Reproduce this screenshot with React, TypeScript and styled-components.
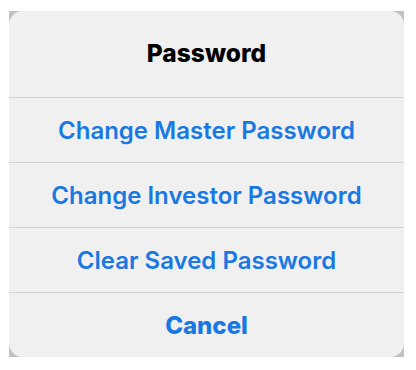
import React from "react";
import styled, { createGlobalStyle } from "styled-components";

const GlobalStyle = createGlobalStyle`
  html, body {
    margin: 0;
    padding: 0;
    background: #ffffff;
  }
  body {
    font-family: Inter, "Liberation Sans", sans-serif;
  }
`;

const Page = styled.div`
  padding: 11px 12px 13px 9px;
`;

const Backdrop = styled.div`
  background: #c2c2c2;
  width: 395px;
  height: 346px;
`;

const Sheet = styled.div`
  display: flex;
  flex-direction: column;
  height: 100%;
  background: #f0f0f0;
  border-radius: 14px;
  overflow: hidden;
`;

const Header = styled.div`
  height: 86px;
  display: flex;
  align-items: center;
  justify-content: center;
  font-size: 24.5px;
  font-weight: 800;
  color: #000;
  padding-bottom: 2px;
  box-sizing: border-box;
`;

const Action = styled.button<{ $bold?: boolean }>`
  flex: 1;
  display: flex;
  align-items: center;
  justify-content: center;
  border: 0;
  border-top: 1px solid #d2d2d2;
  background: transparent;
  padding: 0;
  font-family: Inter, "Liberation Sans", sans-serif;
  font-size: 24px;
  font-weight: ${(p) => (p.$bold ? 800 : 600)};
  color: #1a78e2;
  cursor: pointer;
`;

const actions = [
  "Change Master Password",
  "Change Investor Password",
  "Clear Saved Password",
];

const App = () => {
  return (
    <>
      <GlobalStyle />
      <Page>
        <Backdrop>
          <Sheet>
            <Header>Password</Header>
            {actions.map((label) => (
              <Action key={label}>{label}</Action>
            ))}
            <Action $bold>Cancel</Action>
          </Sheet>
        </Backdrop>
      </Page>
    </>
  );
};

export default App;
